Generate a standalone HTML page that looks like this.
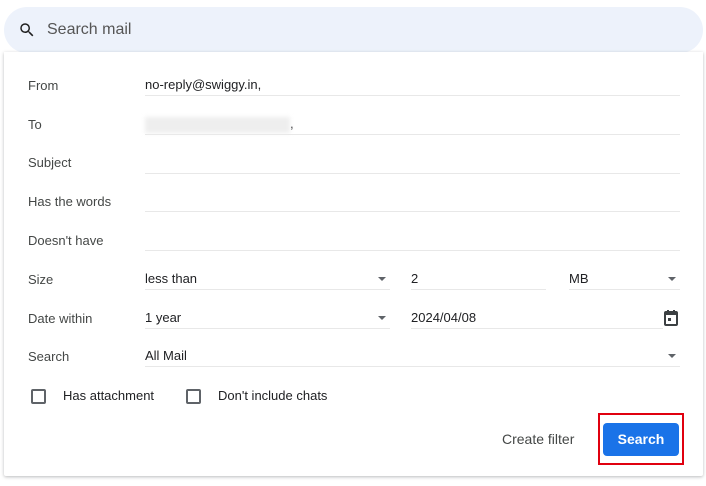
<!DOCTYPE html>
<html><head><style>
body{margin:0;width:706px;height:486px;background:#fff;font-family:"Liberation Sans",Arial,sans-serif;position:relative;overflow:hidden;color:#202124}
.bar{position:absolute;left:4px;top:7px;width:699px;height:46px;background:#edf2fb;border-radius:24px}
.bar span{position:absolute;left:43px;top:14px;font-size:16px;color:#555}
.panel{position:absolute;left:4px;top:52px;width:699px;height:424px;background:#fff;box-shadow:0 1px 3px rgba(60,64,67,.35);border-radius:0 0 2px 2px}
.l{position:absolute;left:28px;font-size:13px;color:#444746}
.f{position:absolute;font-size:13px;color:#202124;border-bottom:1px solid #e8e8e8;height:20px;line-height:20px}
.arr{position:absolute;right:4px;top:8px;width:0;height:0;border-left:4px solid transparent;border-right:4px solid transparent;border-top:4px solid #5f6368}
.cb{position:absolute;width:11px;height:11px;border:2px solid #5f6368;border-radius:2px}
</style></head><body>
<div class="bar"><svg style="position:absolute;left:14px;top:14px" width="18" height="18" viewBox="0 0 24 24"><path d="M15.5 14h-.79l-.28-.27A6.47 6.47 0 0 0 16 9.5 6.5 6.5 0 1 0 9.5 16c1.61 0 3.09-.59 4.23-1.57l.27.28v.79l5 4.99L20.49 19l-4.99-5zm-6 0C7.01 14 5 11.99 5 9.5S7.01 5 9.5 5 14 7.01 14 9.5 11.99 14 9.5 14z" fill="#1f1f1f"/></svg><span>Search mail</span></div>
<div class="panel"></div>
<div class="l" style="top:78px">From</div><div class="f" style="left:145px;top:75px;width:535px">no-reply@swiggy.in,</div>
<div class="l" style="top:117px">To</div><div class="f" style="left:145px;top:114px;width:535px"><span style="display:inline-block;width:145px;height:16px;background:#eee;vertical-align:middle;filter:blur(2px)"></span>,</div>
<div class="l" style="top:155px">Subject</div><div class="f" style="left:145px;top:153px;width:535px"></div>
<div class="l" style="top:194px">Has the words</div><div class="f" style="left:145px;top:191px;width:535px"></div>
<div class="l" style="top:233px">Doesn't have</div><div class="f" style="left:145px;top:230px;width:535px"></div>
<div class="l" style="top:272px">Size</div>
<div class="f" style="left:145px;top:269px;width:245px">less than<div class="arr"></div></div>
<div class="f" style="left:411px;top:269px;width:135px">2</div>
<div class="f" style="left:569px;top:269px;width:111px">MB<div class="arr"></div></div>
<div class="l" style="top:311px">Date within</div>
<div class="f" style="left:145px;top:308px;width:245px">1 year<div class="arr"></div></div>
<div class="f" style="left:411px;top:308px;width:252px">2024/04/08</div>
<svg style="position:absolute;left:663px;top:309px" width="16" height="18" viewBox="0 0 16 18"><rect x="2" y="3" width="12" height="13" rx="1" fill="none" stroke="#3c4043" stroke-width="2"/><rect x="2" y="3" width="12" height="3" fill="#3c4043"/><rect x="4" y="1" width="2" height="3" fill="#3c4043"/><rect x="10" y="1" width="2" height="3" fill="#3c4043"/><rect x="5" y="9" width="3" height="3" fill="#3c4043"/></svg>
<div class="l" style="top:349px">Search</div>
<div class="f" style="left:145px;top:346px;width:535px">All Mail<div class="arr"></div></div>
<div class="cb" style="left:31px;top:389px"></div><div class="l" style="left:63px;top:388px;color:#202124">Has attachment</div>
<div class="cb" style="left:186px;top:389px"></div><div class="l" style="left:218px;top:388px;color:#202124">Don't include chats</div>
<div style="position:absolute;left:502px;top:431px;font-size:14px;color:#444746">Create filter</div>
<div style="position:absolute;left:598px;top:413px;width:82px;height:48px;border:2px solid #e0000f"></div>
<div style="position:absolute;left:603px;top:423px;width:76px;height:33px;background:#1a73e8;border-radius:4px;color:#fff;font-size:14px;font-weight:bold;text-align:center;line-height:33px">Search</div>
</body></html>
